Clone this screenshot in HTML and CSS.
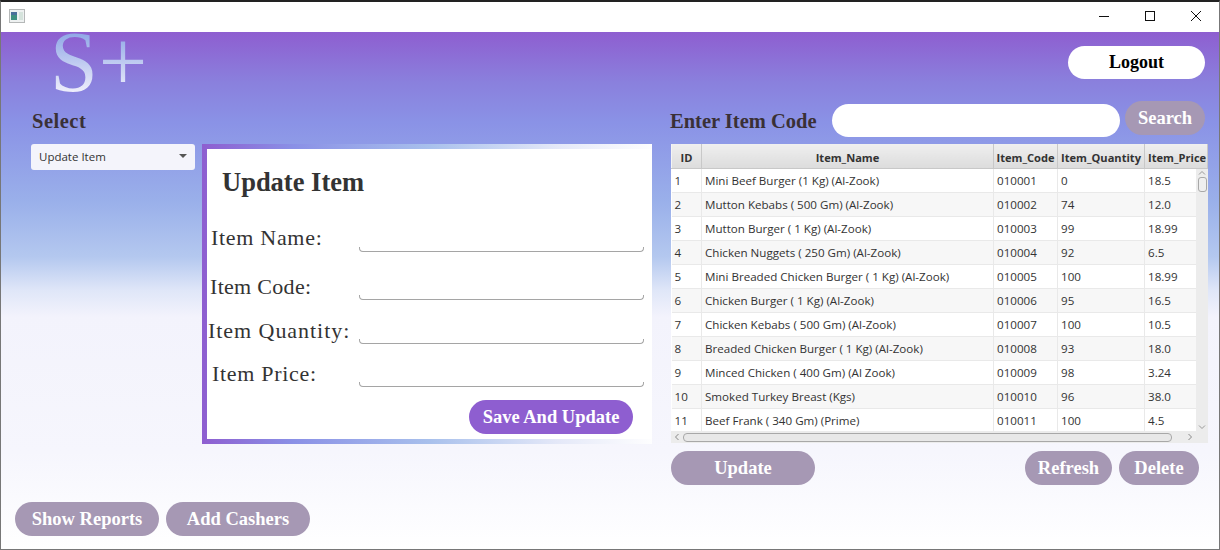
FILE: index.html
```html
<!DOCTYPE html>
<html lang="en">
<head>
    <meta charset="UTF-8">
    <title>S+ Update Item</title>
    <link rel="stylesheet" href="styles.css">
</head>
<body>
    <div class="window">
        <div class="titlebar">
            <svg class="appIcon" width="16" height="14" viewBox="0 0 16 14">
                <rect x="0.5" y="0.5" width="15" height="13" fill="#eef1f1" stroke="#b5b8b8"/>
                <rect x="2" y="3" width="6" height="8" fill="#3f8f80"/>
                <rect x="2" y="3" width="6" height="3" fill="#4a6f9a"/>
                <rect x="10" y="3" width="4" height="8" fill="#d5e3dc"/>
            </svg>
            <div class="winButtons">
                <svg width="14" height="14" viewBox="0 0 14 14"><path d="M2 7.5h10" stroke="#111" fill="none"/></svg>
                <svg width="14" height="14" viewBox="0 0 14 14"><rect x="2.5" y="2.5" width="9" height="9" stroke="#111" fill="none"/></svg>
                <svg width="14" height="14" viewBox="0 0 14 14"><path d="M2 2l10 10M12 2L2 12" stroke="#111" fill="none"/></svg>
            </div>
        </div>

        <div class="page">
            <div class="header">
                <div class="logo">S+</div>
                <button class="logoutBtn">Logout</button>
            </div>

            <div class="main">
                <div class="leftSide">
                    <h2 class="selectTitle">Select</h2>
                    <div class="leftRow">
                        <div class="combo">
                            <span>Update Item</span>
                            <span class="arrow"></span>
                        </div>
                        <div class="panel">
                            <h1>Update Item</h1>
                            <div class="formRow nameRow">
                                <label>Item Name:</label>
                                <div class="field"></div>
                            </div>
                            <div class="formRow codeRow">
                                <label>Item Code:</label>
                                <div class="field"></div>
                            </div>
                            <div class="formRow qtyRow">
                                <label>Item Quantity:</label>
                                <div class="field"></div>
                            </div>
                            <div class="formRow priceRow">
                                <label>Item Price:</label>
                                <div class="field"></div>
                            </div>
                            <div class="saveRow">
                                <button class="btn saveBtn">Save And Update</button>
                            </div>
                        </div>
                    </div>
                </div>

                <div class="rightSide">
                    <div class="searchRow">
                        <h2>Enter Item Code</h2>
                        <div class="searchBox"></div>
                        <button class="btn searchBtn">Search</button>
                    </div>

                    <div class="tableWrap">
                        <table>
                            <thead>
                                <tr>
                                    <th class="colId">ID</th>
                                    <th class="colName">Item_Name</th>
                                    <th class="colCode">Item_Code</th>
                                    <th class="colQty">Item_Quantity</th>
                                    <th class="colPrice">Item_Price</th>
                                </tr>
                            </thead>
                            <tbody>
                                <tr><td>1</td><td>Mini Beef Burger (1 Kg) (Al-Zook)</td><td>010001</td><td>0</td><td>18.5</td></tr>
                                <tr><td>2</td><td>Mutton Kebabs ( 500 Gm) (Al-Zook)</td><td>010002</td><td>74</td><td>12.0</td></tr>
                                <tr><td>3</td><td>Mutton Burger ( 1 Kg) (Al-Zook)</td><td>010003</td><td>99</td><td>18.99</td></tr>
                                <tr><td>4</td><td>Chicken Nuggets ( 250 Gm) (Al-Zook)</td><td>010004</td><td>92</td><td>6.5</td></tr>
                                <tr><td>5</td><td>Mini Breaded Chicken Burger ( 1 Kg) (Al-Zook)</td><td>010005</td><td>100</td><td>18.99</td></tr>
                                <tr><td>6</td><td>Chicken Burger ( 1 Kg) (Al-Zook)</td><td>010006</td><td>95</td><td>16.5</td></tr>
                                <tr><td>7</td><td>Chicken Kebabs ( 500 Gm) (Al-Zook)</td><td>010007</td><td>100</td><td>10.5</td></tr>
                                <tr><td>8</td><td>Breaded Chicken Burger ( 1 Kg) (Al-Zook)</td><td>010008</td><td>93</td><td>18.0</td></tr>
                                <tr><td>9</td><td>Minced Chicken ( 400 Gm) (Al Zook)</td><td>010009</td><td>98</td><td>3.24</td></tr>
                                <tr><td>10</td><td>Smoked Turkey Breast (Kgs)</td><td>010010</td><td>96</td><td>38.0</td></tr>
                                <tr class="lastRow"><td>11</td><td>Beef Frank ( 340 Gm) (Prime)</td><td>010011</td><td>100</td><td>4.5</td></tr>
                            </tbody>
                        </table>
                        <div class="vScroll">
                            <svg width="12" height="8" viewBox="0 0 12 8"><path d="M3 5.5l3-3 3 3" stroke="#999" fill="none"/></svg>
                            <div class="vThumb"></div>
                            <svg class="downArrow" width="12" height="8" viewBox="0 0 12 8"><path d="M3 2.5l3 3 3-3" stroke="#999" fill="none"/></svg>
                        </div>
                        <div class="hScroll">
                            <svg width="8" height="12" viewBox="0 0 8 12"><path d="M5.5 3l-3 3 3 3" stroke="#888" fill="none"/></svg>
                            <div class="hThumb"></div>
                            <svg width="8" height="12" viewBox="0 0 8 12"><path d="M2.5 3l3 3-3 3" stroke="#888" fill="none"/></svg>
                        </div>
                    </div>

                    <div class="tableButtons">
                        <button class="btn updateBtn">Update</button>
                        <button class="btn refreshBtn">Refresh</button>
                        <button class="btn deleteBtn">Delete</button>
                    </div>
                </div>
            </div>

            <div class="footer">
                <button class="btn reportsBtn">Show Reports</button>
                <button class="btn cashersBtn">Add Cashers</button>
            </div>
        </div>
    </div>
</body>
</html>
```

FILE: styles.css
```css
html, body {
    margin: 0;
    height: 100%;
    overflow: hidden;
}
body {
    font-family: "Liberation Serif", serif;
}
.window {
    box-sizing: border-box;
    width: 1220px;
    height: 550px;
    border-top: 2px solid #222;
    border-left: 1px solid #777;
    border-right: 1px solid #777;
    border-bottom: 1px solid #777;
    display: flex;
    flex-direction: column;
}
.titlebar {
    height: 30px;
    flex: none;
    background: white;
    display: flex;
    align-items: flex-start;
    justify-content: space-between;
}
.appIcon {
    margin: 7px 0 0 8px;
}
.winButtons {
    display: flex;
    gap: 32px;
    margin: 7px 16px 0 0;
}
.page {
    flex: 1;
    position: relative;
    background: linear-gradient(to bottom, #8e5ed0 0, #8a80dd 50px, #8a92e6 90px, #9ab0ea 170px, #b4c8ef 225px, #dfe6f8 258px, #f3f3fc 285px, #f6f6fd 420px, #ffffff 518px);
}
.header {
    height: 69px;
    display: flex;
    justify-content: space-between;
    align-items: flex-start;
}
.logo {
    margin-left: 49px;
    font-size: 86px;
    line-height: 60px;
    letter-spacing: 1px;
    background: linear-gradient(to bottom, #8ea6e6, #eeeefb);
    -webkit-background-clip: text;
    background-clip: text;
    color: transparent;
}
.logoutBtn {
    width: 137px;
    height: 33px;
    margin: 14px 14px 0 0;
    border: none;
    border-radius: 17px;
    background: white;
    color: black;
    font-family: "Liberation Serif", serif;
    font-size: 18px;
    font-weight: bold;
}
.main {
    display: flex;
}
.leftSide {
    width: 651px;
    flex: none;
    padding-left: 30px;
    box-sizing: border-box;
}
h2 {
    margin: 0;
    font-size: 20.5px;
    font-weight: bold;
    color: #3a3036;
}
.selectTitle {
    height: 43px;
    line-height: 40px;
    padding-left: 1px;
    letter-spacing: 0.5px;
}
.leftRow {
    display: flex;
    gap: 7px;
    align-items: flex-start;
}
.combo {
    width: 164px;
    height: 26px;
    box-sizing: border-box;
    padding: 0 8px 2px;
    border-radius: 3px;
    background: #f4f4fb;
    display: flex;
    align-items: center;
    justify-content: space-between;
    font-family: "Open Sans", sans-serif;
    font-size: 11.5px;
    color: #333;
}
.arrow {
    width: 0;
    height: 0;
    border-left: 4px solid transparent;
    border-right: 4px solid transparent;
    border-top: 4px solid #555;
}
.panel {
    width: 450px;
    height: 300px;
    box-sizing: border-box;
    border: 5px solid;
    border-image: linear-gradient(to right, #8e5ed0 0, #8a90e6 20%, #a8c0ec 50%, #e4e8f8 78%, #ffffff 100%) 5;
    border-right-width: 0;
    background: white;
    color: #333;
}
.panel h1 {
    margin: 0;
    padding: 18px 0 0 15px;
    height: 48px;
    font-size: 26.5px;
    line-height: 31px;
    font-weight: bold;
    box-sizing: content-box;
}
.formRow {
    display: flex;
    align-items: flex-end;
    justify-content: space-between;
    padding-right: 8px;
}
.formRow label {
    font-size: 22px;
    line-height: 26px;
    letter-spacing: 0.7px;
}
.field {
    width: 285px;
    height: 12px;
    box-sizing: border-box;
    border: 1px solid #a5a5a5;
    border-top: none;
    border-radius: 0 0 4px 4px;
    clip-path: inset(7px 0 0 0);
}
.nameRow {
    margin-top: 3px;
    height: 34px;
    padding-left: 4px;
}
.nameRow label {
    margin-bottom: 1px;
}
.codeRow {
    margin-top: 14px;
    height: 34px;
    padding-left: 3px;
}
.codeRow label {
    letter-spacing: 0.3px;
}
.qtyRow {
    margin-top: 10px;
    height: 34px;
    padding-left: 1px;
}
.qtyRow label {
    letter-spacing: 0.95px;
}
.priceRow {
    margin-top: 9px;
    height: 34px;
    padding-left: 5px;
}
.saveRow {
    display: flex;
    justify-content: flex-end;
    margin-top: 13px;
    padding-right: 19px;
}
.btn {
    height: 34px;
    padding: 0;
    border: none;
    border-radius: 17px;
    background: #a698b4;
    color: white;
    font-family: "Liberation Serif", serif;
    font-size: 18.5px;
    font-weight: bold;
}
.saveBtn {
    width: 164px;
    background: #8e5ed0;
}
.rightSide {
    flex: 1;
    padding-left: 18px;
}
.searchRow {
    display: flex;
    align-items: flex-start;
    height: 43px;
}
.searchRow h2 {
    width: 162px;
    line-height: 40px;
}
.searchBox {
    width: 288px;
    height: 33px;
    border-radius: 17px;
    background: white;
    margin-top: 3px;
}
.searchBtn {
    width: 80px;
    margin: 0 0 0 5px;
}
.tableWrap {
    width: 537px;
    height: 299px;
    margin-left: 1px;
    position: relative;
    overflow: hidden;
    background: white;
    font-family: "Open Sans", sans-serif;
    font-size: 11.6px;
    color: #333;
}
table {
    border-collapse: collapse;
    table-layout: fixed;
    width: 536px;
}
th {
    height: 24px;
    padding: 3px 0 0;
    box-sizing: border-box;
    background: linear-gradient(to bottom, #efefef, #dcdcdc);
    border-right: 1px solid #c8c8c8;
    border-bottom: 1px solid #c8c8c8;
    border-left: 1px solid #f4f4f4;
    text-align: center;
    font-size: 11.1px;
    font-weight: bold;
    white-space: nowrap;
    overflow: hidden;
}
td {
    height: 24px;
    padding: 0 0 0 3px;
    box-sizing: border-box;
    border-right: 1px solid #e9e9e9;
    border-bottom: 1px solid #e9e9e9;
    white-space: nowrap;
    overflow: hidden;
}
tbody tr:nth-child(even) {
    background: #f7f7f7;
}
.colId { width: 30px; }
.colName { width: 292px; }
.colCode { width: 64px; }
.colQty { width: 87px; }
.colPrice { width: 63px; padding-left: 3px; text-align: left; }
.vScroll {
    position: absolute;
    top: 25px;
    right: 0;
    width: 12px;
    height: 262px;
    background: #ececec;
    display: flex;
    flex-direction: column;
    align-items: center;
}
.vThumb {
    width: 9px;
    height: 15px;
    box-sizing: border-box;
    border: 1px solid #a8a8a8;
    border-radius: 3px;
    background: #efefef;
}
.downArrow {
    margin-top: auto;
}
.hScroll {
    position: absolute;
    left: 0;
    right: 0;
    bottom: 0;
    height: 12px;
    background: #ececec;
    display: flex;
    align-items: center;
    padding: 0 14px 0 2px;
}
.hThumb {
    width: 489px;
    height: 9px;
    margin: 0 auto 0 2px;
    box-sizing: border-box;
    border: 1px solid #a8a8a8;
    border-radius: 4px;
    background: #e8e8e8;
}
.tableButtons {
    display: flex;
    margin-top: 8px;
    margin-left: 1px;
}
.updateBtn {
    width: 144px;
}
.refreshBtn {
    width: 87px;
    margin-left: 210px;
}
.deleteBtn {
    width: 80px;
    margin-left: 7px;
}
.footer {
    position: absolute;
    left: 14px;
    bottom: 13px;
    display: flex;
    gap: 7px;
}
.reportsBtn {
    width: 144px;
}
.cashersBtn {
    width: 144px;
}
```
